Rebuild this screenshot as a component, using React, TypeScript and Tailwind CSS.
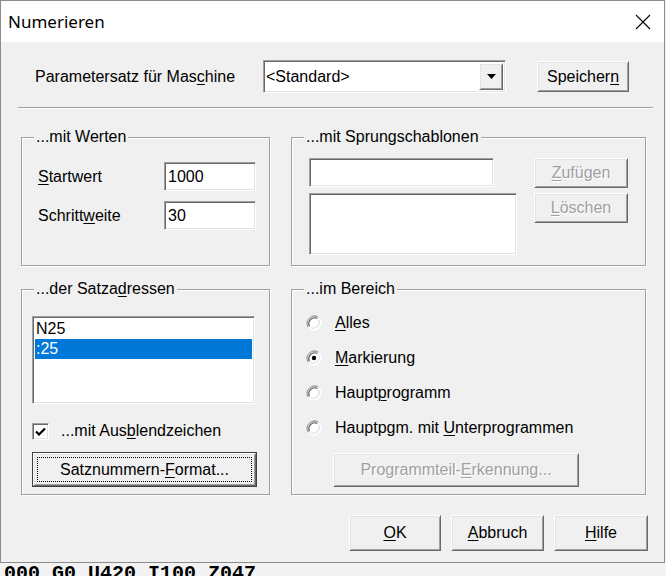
import React from "react"

const ui = { fontFamily: '"Liberation Sans", Arial, sans-serif' }

// classic 3D edges
const raised =
  "bg-[#f0f0f0] border border-t-white border-l-white border-b-[#696969] border-r-[#696969] shadow-[inset_1px_1px_0_#e3e3e3,inset_-1px_-1px_0_#a0a0a0]"
const sunken =
  "bg-white border border-t-[#a0a0a0] border-l-[#a0a0a0] border-b-white border-r-white shadow-[inset_1px_1px_0_#696969,inset_-1px_-1px_0_#e3e3e3]"
const disabledText = "text-[#a0a0a0] [text-shadow:1px_1px_0_#ffffff]"

function Key({ children }: { children: React.ReactNode }) {
  return <span className="underline underline-offset-2 decoration-1">{children}</span>
}

function Button({
  className = "",
  disabled,
  children,
}: {
  className?: string
  disabled?: boolean
  children: React.ReactNode
}) {
  return (
    <div className={`${raised} flex items-center justify-center text-[16px] ${disabled ? disabledText : "text-black"} ${className}`}>
      {children}
    </div>
  )
}

function Group({ title, className = "", children }: { title: React.ReactNode; className?: string; children: React.ReactNode }) {
  return (
    <fieldset className={`border border-[#a0a0a0] shadow-[1px_1px_0_#ffffff,inset_1px_1px_0_#ffffff] ${className}`}>
      <legend className="ml-[12px] px-[2px] text-[16px] leading-[18px] bg-[#f0f0f0]">{title}</legend>
      {children}
    </fieldset>
  )
}

function Radio({ checked }: { checked?: boolean }) {
  return (
    <svg width="16" height="16" viewBox="0 0 16 16" className="shrink-0">
      <circle cx="8" cy="8" r="7" fill="#ffffff" />
      {/* upper-left shadow arcs, lower-right highlight arcs */}
      <path d="M2.3 12.2 A7.2 7.2 0 0 1 12.2 2.3" stroke="#a0a0a0" strokeWidth="1.3" fill="none" />
      <path d="M3.5 11.3 A5.8 5.8 0 0 1 11.3 3.5" stroke="#5a5a5a" strokeWidth="1.2" fill="none" />
      <path d="M3.8 13.7 A7.2 7.2 0 0 0 13.7 3.8" stroke="#ffffff" strokeWidth="1.3" fill="none" />
      <path d="M4.7 12.5 A5.8 5.8 0 0 0 12.5 4.7" stroke="#dcdcdc" strokeWidth="1.2" fill="none" />
      {checked && <circle cx="8" cy="8" r="2.2" fill="#000000" />}
    </svg>
  )
}

function RadioRow({ checked, children }: { checked?: boolean; children: React.ReactNode }) {
  return (
    <div className="h-[24px] flex items-center">
      <Radio checked={checked} />
      <span className="ml-[13px] text-[16px]">{children}</span>
    </div>
  )
}

export default function App() {
  return (
    <div className="w-[666px] h-[576px] bg-[#f3f3f3] overflow-hidden text-black" style={ui}>
      <div className="w-[665px] h-[563px] border border-[#8c8c8c] flex flex-col bg-[#f0f0f0]">
        {/* title bar */}
        <div className="h-[41px] bg-white flex items-center justify-between pl-[7px] pr-[13px] shrink-0">
          <span className="text-[17px]" style={{ fontFamily: '"Noto Sans", "Open Sans", sans-serif' }}>
            Numerieren
          </span>
          <svg width="16" height="16" viewBox="0 0 16 16">
            <path d="M1 1 L15 15 M15 1 L1 15" stroke="#000" strokeWidth="1.1" />
          </svg>
        </div>

        {/* machine parameter set */}
        <div className="mt-[18px] h-[33px] flex items-center">
          <span className="ml-[34px] w-[228px] text-[16px]">
            Parametersatz für Mas<Key>c</Key>hine
          </span>
          <div className={`${sunken} w-[243px] h-[33px] flex items-center`}>
            <span className="flex-1 pl-[2px] text-[16px]">&lt;Standard&gt;</span>
            <div className={`${raised} w-[24px] h-[27px] mr-[2px] flex items-center justify-center`}>
              <svg width="9" height="5" viewBox="0 0 9 5">
                <path d="M0 0 H9 L4.5 5 Z" fill="#000" />
              </svg>
            </div>
          </div>
          <Button className="ml-[31px] w-[92px] h-[31px]">
            Speicher<Key>n</Key>
          </Button>
        </div>

        {/* etched separator */}
        <div className="mt-[14px] ml-[17px] w-[635px] h-[2px] border-t border-[#a0a0a0] border-b border-b-white" />

        {/* upper groups */}
        <div className="mt-[19px] flex">
          <Group title="...mit Werten" className="ml-[20px] w-[249px] h-[138px]">
            <div className="pl-[16px] pt-[16px] flex flex-col gap-[10px]">
              <div className="flex items-center">
                <span className="w-[126px] text-[16px]">
                  <Key>S</Key>tartwert
                </span>
                <div className={`${sunken} w-[92px] h-[29px] pl-[3px] flex items-center text-[16px]`}>1000</div>
              </div>
              <div className="flex items-center">
                <span className="w-[126px] text-[16px]">
                  Schritt<Key>w</Key>eite
                </span>
                <div className={`${sunken} w-[92px] h-[29px] pl-[3px] flex items-center text-[16px]`}>30</div>
              </div>
            </div>
          </Group>

          <Group title="...mit Sprungschablonen" className="ml-[21px] w-[355px] h-[138px]">
            <div className="pl-[17px] pt-[12px] flex">
              <div className="flex flex-col gap-[6px]">
                <div className={`${sunken} w-[185px] h-[29px]`} />
                <div className={`${sunken} w-[208px] h-[62px]`} />
              </div>
              <div className="ml-[17px] flex flex-col gap-[5px]">
                <Button disabled className="w-[94px] h-[30px]">
                  <Key>Z</Key>ufügen
                </Button>
                <Button disabled className="w-[94px] h-[30px]">
                  <Key>L</Key>öschen
                </Button>
              </div>
            </div>
          </Group>
        </div>

        {/* lower groups */}
        <div className="mt-[14px] flex">
          <Group
            title={
              <>
                ...der Satza<Key>d</Key>ressen
              </>
            }
            className="ml-[20px] w-[249px] h-[215px]"
          >
            <div className="pl-[10px] pt-[18px] flex flex-col">
              <div className={`${sunken} w-[223px] h-[88px] p-[2px] text-[16px]`}>
                <div className="h-[20px] pl-[1px] leading-[20px]">N25</div>
                <div className="h-[20px] pl-[1px] leading-[20px] bg-[#0078d7] text-white">:25</div>
              </div>
              <div className="mt-[15px] flex items-center">
                <div className={`${sunken} w-[17px] h-[17px] flex items-center justify-center`}>
                  <svg width="11" height="9" viewBox="0 0 11 9">
                    <path d="M1 4.5 L4 7.5 L10 1.5" stroke="#000" strokeWidth="2.2" fill="none" />
                  </svg>
                </div>
                <span className="ml-[12px] text-[16px]">
                  ...mit Aus<Key>b</Key>lendzeichen
                </span>
              </div>
              <div className="mt-[9px] w-[225px] h-[35px] border border-[#404040]">
                <div className={`${raised} w-full h-full p-[3px]`}>
                  <div className="w-full h-full border border-dotted border-black flex items-center justify-center text-[16px]">
                    Satznummern-<Key>F</Key>ormat...
                  </div>
                </div>
              </div>
            </div>
          </Group>

          <Group title="...im Bereich" className="ml-[21px] w-[355px] h-[215px]">
            <div className="pl-[14px] pt-[13px] flex flex-col gap-[11px]">
              <RadioRow>
                <Key>A</Key>lles
              </RadioRow>
              <RadioRow checked>
                <Key>M</Key>arkierung
              </RadioRow>
              <RadioRow>
                Haupt<Key>p</Key>rogramm
              </RadioRow>
              <RadioRow>
                Hauptpgm. mit <Key>U</Key>nterprogrammen
              </RadioRow>
            </div>
            <Button disabled className="mt-[13px] ml-[41px] w-[246px] h-[34px]">
              Programmteil-<Key>E</Key>rkennung...
            </Button>
          </Group>
        </div>

        {/* dialog buttons */}
        <div className="mt-[20px] pr-[16px] flex justify-end gap-[10px]">
          <Button className="w-[92px] h-[36px]">
            <Key>O</Key>K
          </Button>
          <Button className="w-[93px] h-[36px]">
            <Key>A</Key>bbruch
          </Button>
          <Button className="w-[94px] h-[36px]">
            <Key>H</Key>ilfe
          </Button>
        </div>
      </div>

      {/* editor line behind the dialog */}
      <div
        className="pl-[4px] text-[20px] leading-[20px] font-bold whitespace-pre mt-[1px]"
        style={{ fontFamily: '"Liberation Mono", monospace' }}
      >
        000 G0 U420 I100 Z047
      </div>
    </div>
  )
}
